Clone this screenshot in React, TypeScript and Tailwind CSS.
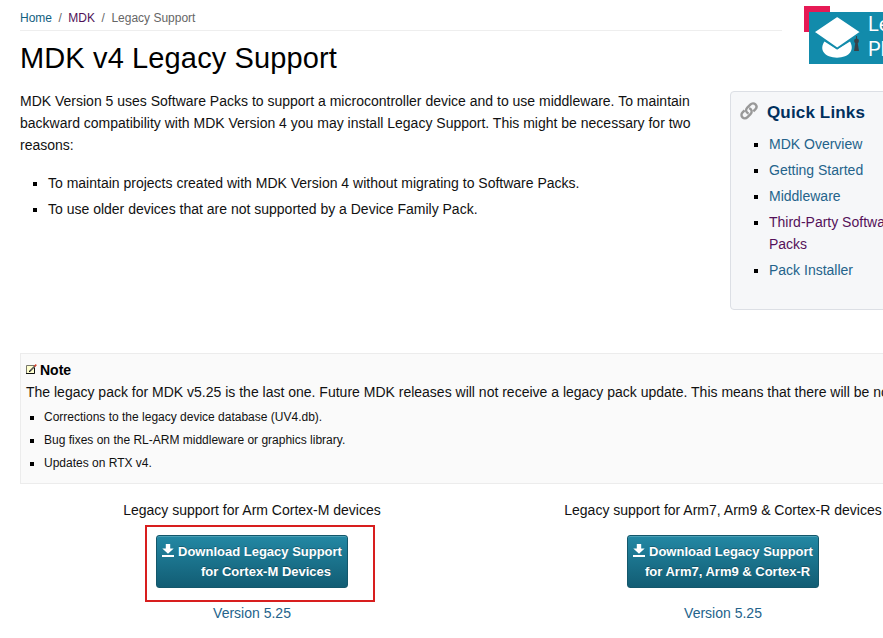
import type { ReactNode } from 'react';

const introPoints = [
  'To maintain projects created with MDK Version 4 without migrating to Software Packs.',
  'To use older devices that are not supported by a Device Family Pack.',
];

const quickLinks = [
  { label: 'MDK Overview' },
  { label: 'Getting Started' },
  { label: 'Middleware' },
  { label: 'Third-Party Software Packs', visited: true },
  { label: 'Pack Installer' },
];

const notePoints = [
  'Corrections to the legacy device database (UV4.db).',
  'Bug fixes on the RL-ARM middleware or graphics library.',
  'Updates on RTX v4.',
];

function LearningBadge() {
  return (
    <div className="relative h-[58px] w-[180px] shrink-0">
      <div className="absolute left-0 top-0 h-[26px] w-[26px] bg-[#e61a55]" />
      <div className="absolute left-[5px] top-[6px] flex h-[52px] w-[175px] bg-[#128bab] text-white">
        <svg className="h-[52px] w-[54px] shrink-0" viewBox="0 0 54 52">
          <path d="M15.5 29.5L28 37.5L41 29.5C43 33 43.500 37 41.500 40C37 47.500 19 47.500 14.500 40C12.500 37 13 33 15.500 29.500Z" fill="#fff" />
          <path d="M28.200 4L52 20L28.200 36.500L4.500 20Z" fill="#fff" stroke="#128bab" strokeWidth="1.600" />
          <path d="M47.500 24V29" stroke="#3a4248" strokeWidth="1" />
          <circle cx="47.500" cy="29" r="2.400" fill="#3a4248" />
          <path d="M46.300 31H48.700L50 39H45Z" fill="#3a4248" />
        </svg>
        <div className="pl-[5px] font-['Roboto',sans-serif] text-[20px] leading-[25px]">
          <div>Learning</div>
          <div>Platform</div>
        </div>
      </div>
    </div>
  );
}

function LinkIcon() {
  return (
    <svg className="h-[18px] w-[18px]" viewBox="0 0 18 18" fill="none" stroke="#999" strokeWidth="2.400" strokeLinecap="butt">
      <path d="M8.600 11.600C5.900 10.500 5.300 7.600 7.300 5.600L10.300 2.600C11.900 1 14.100 1.100 15.400 2.400C16.800 3.800 16.800 5.900 15.300 7.400L13.300 9.400" />
      <path d="M9.200 6.200C11.900 7.300 12.500 10.200 10.500 12.200L7.500 15.200C5.900 16.800 3.800 16.700 2.500 15.400C1.100 14 1.100 11.900 2.600 10.400L4.600 8.400" />
    </svg>
  );
}

function NoteIcon() {
  return (
    <svg className="h-[11px] w-[11px]" viewBox="0 0 11 11">
      <path d="M.5 1.500H8.500V9.500H.5Z" fill="#ffffcf" stroke="#77776a" />
      <path d="M0 9.500H8.500V4" fill="none" stroke="#111" />
      <path d="M3.500 7.500L9 2" stroke="#555" strokeWidth="1.700" />
      <path d="M3 8L4.500 6.500" stroke="#111" />
      <path d="M8.500 2.500L10.300 .7" stroke="#d8432f" strokeWidth="1.700" />
    </svg>
  );
}

function DownloadIcon() {
  return (
    <svg className="-mt-[3px] h-[13px] w-[12px] shrink-0" viewBox="0 0 12 13" fill="#fff">
      <path d="M3.800 0H8.200V4.500H11.700L6 9.800L.3 4.500H3.800Z" />
      <path d="M0 11H12V13H0Z" />
    </svg>
  );
}

function DownloadButton({ children }: { children: ReactNode }) {
  return (
    <a className="block h-[53px] w-[192px] rounded-[3px] border border-[#14576b] bg-linear-to-b from-[#2388a4] to-[#125d74] pt-[6px] text-[13px] font-bold leading-5 whitespace-nowrap text-white shadow-[inset_0_1px_0_#4ba0b6] [text-shadow:0_-1px_0_rgba(0,0,0,0.25)]">
      {children}
    </a>
  );
}

export default function App() {
  return (
    <div className="h-[638px] w-full overflow-hidden bg-white pl-5 font-['Liberation_Sans',Arial,sans-serif] text-[14px] leading-[22px] text-[#111]">
      <header className="flex h-[90px] gap-[22px]">
        <div className="w-[762px] shrink-0">
          <nav className="flex h-[31px] gap-[6.5px] border-b border-[#eee] pt-[7px] text-[12px] text-[#666]">
            <a className="text-[#11607f]">Home</a>
            <span>/</span>
            <a className="text-[#4f1158]">MDK</a>
            <span>/</span>
            <span>Legacy Support</span>
          </nav>
          <h1 className="pt-[10px] text-[29px] leading-[34px] tracking-[0.13px] text-black">MDK v4 Legacy Support</h1>
        </div>
        <div className="pt-[6px]">
          <LearningBadge />
        </div>
      </header>

      <main>
        <div className="flex h-[263px]">
          <div className="w-[710px] shrink-0">
            <p className="w-[685px]">
              MDK Version 5 uses Software Packs to support a microcontroller device and to use middleware. To maintain
              backward compatibility with MDK Version 4 you may install Legacy Support. This might be necessary for two
              reasons:
            </p>
            <ul className="mt-4 space-y-1">
              {introPoints.map((point) => (
                <li key={point} className="flex items-center pl-[13px]">
                  <span className="mt-[2px] mr-[11px] size-1 bg-black" />
                  {point}
                </li>
              ))}
            </ul>
          </div>

          <aside className="mt-px h-[219px] w-[194px] shrink-0 rounded-[4px] border border-[#dcdfe5] bg-[#f6f7f9]">
            <h2 className="flex h-[41px] items-center gap-2 pl-[10px] text-[17px] font-bold tracking-[0.15px] text-[#00305e]">
              <span className="-mt-[3px] -ml-px mr-px">
                <LinkIcon />
              </span>
              Quick Links
            </h2>
            <ul className="space-y-1">
              {quickLinks.map(({ label, visited }) => (
                <li key={label} className="flex pl-[23px]">
                  <span className="mt-[10px] mr-[11px] size-1 shrink-0 bg-black" />
                  <a className={visited ? 'text-[#551159]' : 'text-[#24638b]'}>{label}</a>
                </li>
              ))}
            </ul>
          </aside>
        </div>

        <section className="h-[131px] w-[920px] border border-[#ececec] bg-[#fafafa] pt-[5px] pl-[5px]">
          <h3 className="flex items-center gap-[3px] font-bold text-black">
            <span className="-mt-[2px]">
              <NoteIcon />
            </span>
            Note
          </h3>
          <p className="whitespace-nowrap">
            The legacy pack for MDK v5.25 is the last one. Future MDK releases will not receive a legacy pack update. This
            means that there will be no:
          </p>
          <ul className="mt-[2px] text-[12px]">
            {notePoints.map((point) => (
              <li key={point} className="flex h-[23px] items-center pl-1">
                <span className="mt-[2px] mr-[10px] size-1 bg-black" />
                {point}
              </li>
            ))}
          </ul>
        </section>

        <section className="flex w-[942px] gap-[7px] pt-[15px]">
          <div className="flex w-[464px] shrink-0 flex-col items-center">
            <p>Legacy support for Arm Cortex-M devices</p>
            <div className="relative mt-[14px]">
              <DownloadButton>
                <span className="flex items-center gap-1 pl-[5px]">
                  <DownloadIcon />
                  Download Legacy Support
                </span>
                <span className="block pl-[44px]">for Cortex-M Devices</span>
              </DownloadButton>
              <div className="absolute -top-[10px] -left-[11px] h-[77px] w-[230px] border-2 border-[#d81e1e]" />
            </div>
            <a className="mt-[14px] text-[#24638b]">Version 5.25</a>
          </div>
          <div className="flex w-[471px] shrink-0 flex-col items-center pr-[7px]">
            <p className="whitespace-nowrap">Legacy support for Arm7, Arm9 &amp; Cortex-R devices</p>
            <div className="mt-[14px]">
              <DownloadButton>
                <span className="flex items-center gap-1 pl-[5px]">
                  <DownloadIcon />
                  Download Legacy Support
                </span>
                <span className="block pl-[17px]">for Arm7, Arm9 &amp; Cortex-R</span>
              </DownloadButton>
            </div>
            <a className="mt-[14px] text-[#24638b]">Version 5.25</a>
          </div>
        </section>
      </main>
    </div>
  );
}
